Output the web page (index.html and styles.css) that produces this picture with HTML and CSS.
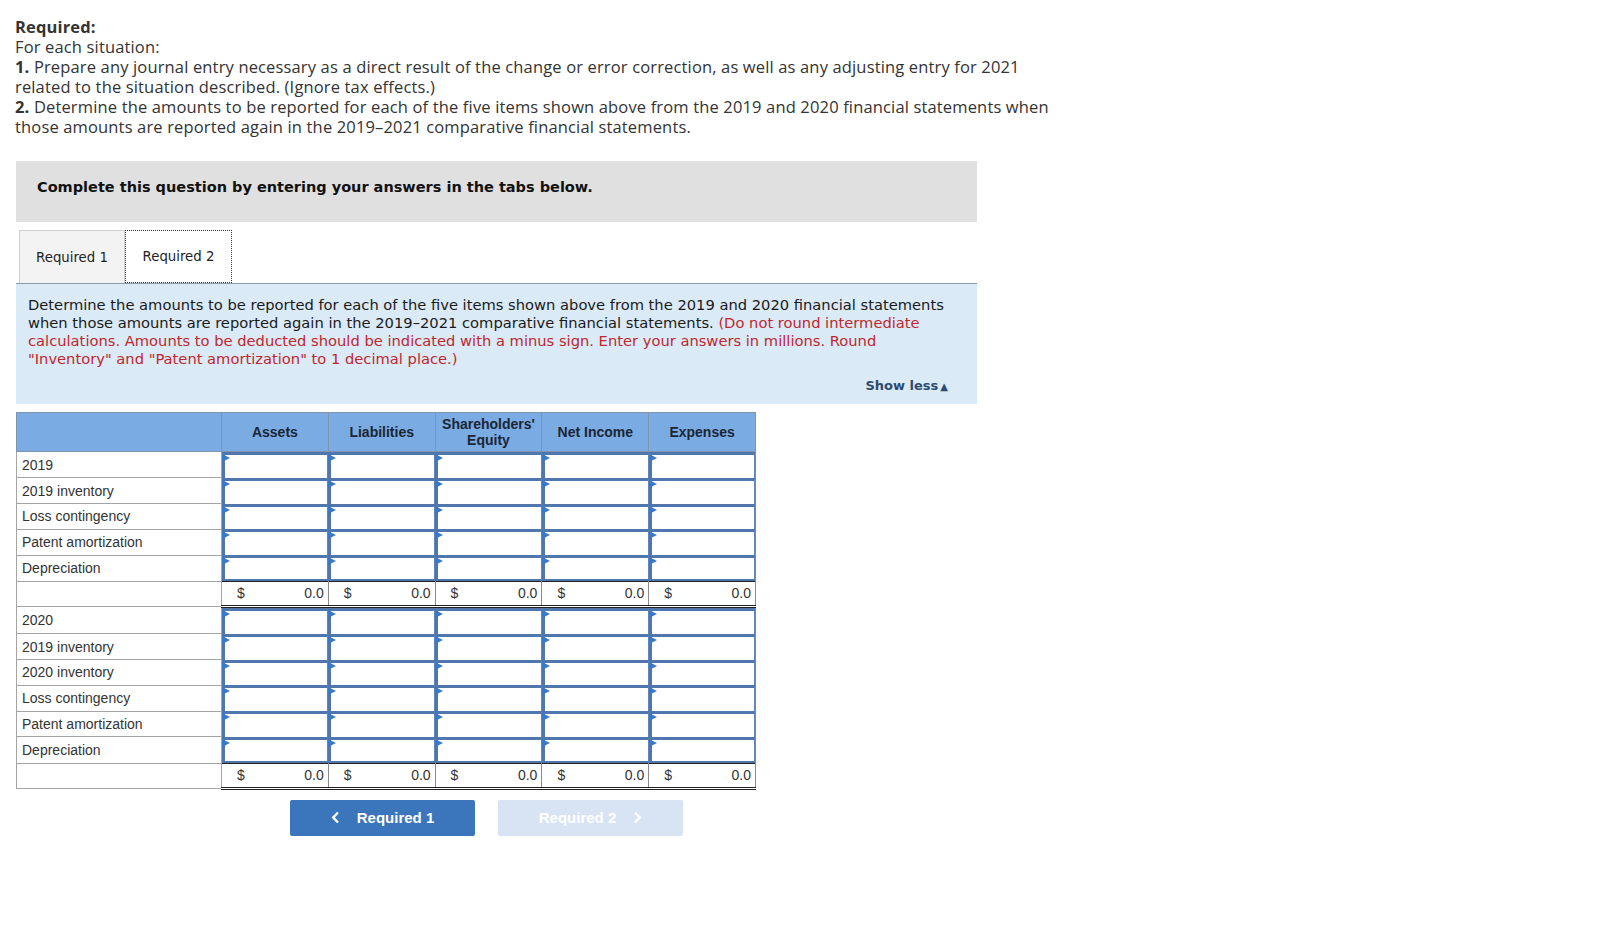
FILE: index.html
```html
<!DOCTYPE html>
<html>
<head>
<meta charset="utf-8">
<title>Required 2</title>
<link rel="stylesheet" href="styles.css">
</head>
<body>
<div class="page">
  <div class="req">
    <p class="strong">Required:</p>
    <p>For each situation:</p>
    <p><b>1.</b> Prepare any journal entry necessary as a direct result of the change or error correction, as well as any adjusting entry for 2021<br>related to the situation described. (Ignore tax effects.)</p>
    <p><b>2.</b> Determine the amounts to be reported for each of the five items shown above from the 2019 and 2020 financial statements when<br>those amounts are reported again in the 2019–2021 comparative financial statements.</p>
  </div>

  <div class="main">
    <div class="banner">Complete this question by entering your answers in the tabs below.</div>

    <div class="tabs">
      <div class="tab tab1">Required 1</div>
      <div class="tab tab2">Required 2</div>
    </div>

    <div class="info">
      <p>Determine the amounts to be reported for each of the five items shown above from the 2019 and 2020 financial statements<br>when those amounts are reported again in the 2019–2021 comparative financial statements. <span class="red">(Do not round intermediate<br>calculations. Amounts to be deducted should be indicated with a minus sign. Enter your answers in millions. Round<br>"Inventory" and "Patent amortization" to 1 decimal place.)</span></p>
      <div class="showless">Show less<span class="tri">▲</span></div>
    </div>

    <table class="grid">
      <colgroup>
        <col class="clbl"><col class="c"><col class="c"><col class="c"><col class="c"><col class="c">
      </colgroup>
      <thead>
        <tr>
          <th></th>
          <th>Assets</th>
          <th>Liabilities</th>
          <th>Shareholders' Equity</th>
          <th>Net Income</th>
          <th>Expenses</th>
        </tr>
      </thead>
      <tbody>
        <tr><td class="l">2019</td><td class="in"><div class="box"></div></td><td class="in"><div class="box"></div></td><td class="in"><div class="box"></div></td><td class="in"><div class="box"></div></td><td class="in"><div class="box"></div></td></tr>
        <tr><td class="l">2019 inventory</td><td class="in"><div class="box"></div></td><td class="in"><div class="box"></div></td><td class="in"><div class="box"></div></td><td class="in"><div class="box"></div></td><td class="in"><div class="box"></div></td></tr>
        <tr><td class="l">Loss contingency</td><td class="in"><div class="box"></div></td><td class="in"><div class="box"></div></td><td class="in"><div class="box"></div></td><td class="in"><div class="box"></div></td><td class="in"><div class="box"></div></td></tr>
        <tr><td class="l">Patent amortization</td><td class="in"><div class="box"></div></td><td class="in"><div class="box"></div></td><td class="in"><div class="box"></div></td><td class="in"><div class="box"></div></td><td class="in"><div class="box"></div></td></tr>
        <tr class="last"><td class="l">Depreciation</td><td class="in"><div class="box"></div></td><td class="in"><div class="box"></div></td><td class="in"><div class="box"></div></td><td class="in"><div class="box"></div></td><td class="in"><div class="box"></div></td></tr>
        <tr class="total"><td class="l"></td><td class="t"><div class="tv"><span>$</span><span>0.0</span></div></td><td class="t"><div class="tv"><span>$</span><span>0.0</span></div></td><td class="t"><div class="tv"><span>$</span><span>0.0</span></div></td><td class="t"><div class="tv"><span>$</span><span>0.0</span></div></td><td class="t"><div class="tv"><span>$</span><span>0.0</span></div></td></tr>

        <tr><td class="l">2020</td><td class="in"><div class="box"></div></td><td class="in"><div class="box"></div></td><td class="in"><div class="box"></div></td><td class="in"><div class="box"></div></td><td class="in"><div class="box"></div></td></tr>
        <tr><td class="l">2019 inventory</td><td class="in"><div class="box"></div></td><td class="in"><div class="box"></div></td><td class="in"><div class="box"></div></td><td class="in"><div class="box"></div></td><td class="in"><div class="box"></div></td></tr>
        <tr><td class="l">2020 inventory</td><td class="in"><div class="box"></div></td><td class="in"><div class="box"></div></td><td class="in"><div class="box"></div></td><td class="in"><div class="box"></div></td><td class="in"><div class="box"></div></td></tr>
        <tr><td class="l">Loss contingency</td><td class="in"><div class="box"></div></td><td class="in"><div class="box"></div></td><td class="in"><div class="box"></div></td><td class="in"><div class="box"></div></td><td class="in"><div class="box"></div></td></tr>
        <tr><td class="l">Patent amortization</td><td class="in"><div class="box"></div></td><td class="in"><div class="box"></div></td><td class="in"><div class="box"></div></td><td class="in"><div class="box"></div></td><td class="in"><div class="box"></div></td></tr>
        <tr class="last"><td class="l">Depreciation</td><td class="in"><div class="box"></div></td><td class="in"><div class="box"></div></td><td class="in"><div class="box"></div></td><td class="in"><div class="box"></div></td><td class="in"><div class="box"></div></td></tr>
        <tr class="total"><td class="l"></td><td class="t"><div class="tv"><span>$</span><span>0.0</span></div></td><td class="t"><div class="tv"><span>$</span><span>0.0</span></div></td><td class="t"><div class="tv"><span>$</span><span>0.0</span></div></td><td class="t"><div class="tv"><span>$</span><span>0.0</span></div></td><td class="t"><div class="tv"><span>$</span><span>0.0</span></div></td></tr>
      </tbody>
    </table>

    <div class="nav">
      <div class="btn prev">
        <svg class="chev" width="9" height="13" viewBox="0 0 9 13"><path d="M7 1.5 L2.2 6.5 L7 11.5" fill="none" stroke="#fff" stroke-width="2.4"/></svg>
        <span>Required 1</span>
      </div>
      <div class="btn next">
        <span>Required 2</span>
        <svg class="chev" width="9" height="13" viewBox="0 0 9 13"><path d="M2 1.5 L6.8 6.5 L2 11.5" fill="none" stroke="#fff" stroke-width="2.4"/></svg>
      </div>
    </div>
  </div>
</div>
</body>
</html>
```

FILE: styles.css
```css
* { box-sizing: border-box; }

body {
  margin: 0;
  background: #fff;
}

.page {
  padding: 17px 0 40px 15px;
}

.req {
  font-family: "Open Sans", "Liberation Sans", sans-serif;
  font-size: 16.5px;
  letter-spacing: 0.15px;
  line-height: 20px;
  color: #333;
  white-space: nowrap;
}

.req p { margin: 0; }
.req .strong { font-weight: bold; }
.req b { font-weight: bold; }

.main {
  width: 961px;
  margin: 24px 0 0 1px;
}

.banner {
  background: #e0e0e0;
  height: 61px;
  padding: 17px 21px 0;
  font-family: "DejaVu Sans", Verdana, sans-serif;
  font-weight: bold;
  font-size: 14.5px;
  line-height: 18px;
  color: #111;
}

.tabs {
  display: flex;
  margin-top: 8px;
  padding-left: 3px;
  border-bottom: 1px solid #8f9aa6;
}

.tab {
  height: 53px;
  display: flex;
  align-items: center;
  justify-content: center;
  font-family: "DejaVu Sans", Verdana, sans-serif;
  font-size: 13.3px;
  color: #222;
}

.tab1 {
  width: 106px;
  background: #f3f3f3;
  border: 1px solid #cfcfcf;
  border-bottom: none;
}

.tab2 {
  width: 107px;
  background: #fff;
  border: 1px dotted #333;
  margin-bottom: -1px;
}

.info {
  background: #daeaf7;
  height: 120px;
  padding: 12px 12px 0 12px;
  font-family: "DejaVu Sans", Verdana, sans-serif;
  font-size: 14.7px;
  line-height: 18px;
  color: #1a1a1a;
}

.info p { margin: 0; }

.red { color: #c0272d; }

.showless {
  margin-top: 9px;
  padding-right: 17px;
  text-align: right;
  font-weight: bold;
  font-size: 13px;
  color: #2d4b6e;
}

.showless .tri {
  font-size: 10px;
  margin-left: 2px;
}

.grid {
  margin-top: 8px;
  border-collapse: collapse;
  table-layout: fixed;
  width: 739px;
  font-family: "Liberation Sans", Arial, sans-serif;
  font-size: 14px;
  color: #333;
  border: 1px solid #8a8a8a;
}

.grid col.clbl { width: 205px; }
.grid col.c { width: 106.8px; }

.grid th {
  background: #7aabe2;
  height: 39px;
  border: 1px solid #8095ad;
  font-weight: bold;
  color: #1b2535;
  line-height: 16px;
  padding: 0 4px;
  text-align: center;
}

.grid td {
  height: 25.8px;
  padding: 0;
}

.grid td.l {
  border: 1px solid #a5a5a5;
  padding: 0 5px;
  white-space: nowrap;
}

.grid td.in {
  border: none;
  padding: 0;
}

.box {
  position: relative;
  height: 25.8px;
  background: #fff;
  border-top: 3px solid #4f77ae;
  border-left: 3px solid #4f77ae;
  border-right: 1px solid #5e84b8;
}

.last .box {
  border-bottom: 2px solid #4f77ae;
}

.box::before {
  content: "";
  position: absolute;
  left: -3px;
  top: -1px;
  border-top: 4px solid transparent;
  border-bottom: 4px solid transparent;
  border-left: 8px solid #3a78c8;
}

.grid tr.total td {
  height: 25px;
}

.grid td.t {
  border-top: 1px solid #222;
  border-bottom: 3px double #222;
  border-left: 1px solid #8a8a8a;
  border-right: 1px solid #8a8a8a;
  padding: 0 4px 0 15px;
}

.tv {
  display: flex;
  justify-content: space-between;
  align-items: center;
}

.nav {
  display: flex;
  gap: 23px;
  margin-top: 10px;
  padding-left: 274px;
}

.btn {
  width: 185px;
  height: 36px;
  display: flex;
  align-items: center;
  justify-content: center;
  gap: 17px;
  font-family: "Liberation Sans", Arial, sans-serif;
  font-weight: bold;
  font-size: 15px;
  color: #fff;
  border-radius: 2px;
}

.prev { background: #3b76bc; }
.next { background: #d8e4f3; }

.chev { display: block; }
```
